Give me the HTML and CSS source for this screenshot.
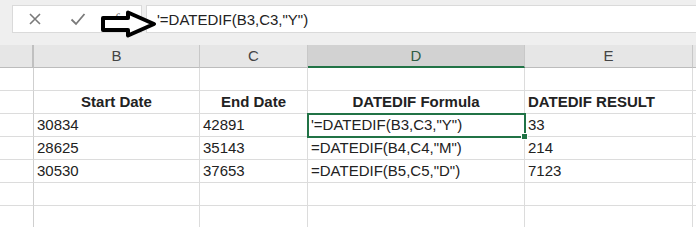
FILE: index.html
```html
<!DOCTYPE html>
<html lang="en">
<head>
    <meta charset="UTF-8">
    <title>DATEDIF</title>
    <link rel="stylesheet" href="styles.css">
</head>
<body>
    <div class="toolbar">
        <div class="buttons-box">
            <svg class="icon" width="14" height="14" viewBox="0 0 14 14">
                <path d="M2 2 L12 12 M12 2 L2 12" stroke="#7a7a7a" stroke-width="1.6" fill="none"/>
            </svg>
            <svg class="icon" width="16" height="14" viewBox="0 0 16 14">
                <path d="M1.5 7.5 L6 12 L14.5 2" stroke="#7a7a7a" stroke-width="1.8" fill="none"/>
            </svg>
            <span class="fx">fx</span>
        </div>
        <div class="formula-box">'=DATEDIF(B3,C3,"Y")</div>
        <!-- flecha dibujada encima de la barra -->
        <svg class="arrow" width="58" height="28" viewBox="0 0 58 28">
            <path d="M3 8 H28 V2.5 L54 14 L28 25.5 V20 H3 Z" fill="#fff" stroke="#000" stroke-width="4" stroke-linejoin="round"/>
        </svg>
    </div>

    <div class="sheet">
        <div class="hd corner"></div>
        <div class="hd">B</div>
        <div class="hd">C</div>
        <div class="hd active">D</div>
        <div class="hd">E</div>
        <div class="hd rest"></div>

        <div class="rn"></div><div class="cell"></div><div class="cell"></div><div class="cell"></div><div class="cell"></div><div class="cell rest"></div>

        <div class="rn"></div>
        <div class="cell bold center">Start Date</div>
        <div class="cell bold center">End Date</div>
        <div class="cell bold center">DATEDIF Formula</div>
        <div class="cell bold">DATEDIF RESULT</div>
        <div class="cell rest"></div>

        <div class="rn"></div>
        <div class="cell">30834</div>
        <div class="cell">42891</div>
        <div class="cell selected">'=DATEDIF(B3,C3,"Y")<span class="handle"></span></div>
        <div class="cell">33</div>
        <div class="cell rest"></div>

        <div class="rn"></div>
        <div class="cell">28625</div>
        <div class="cell">35143</div>
        <div class="cell">=DATEDIF(B4,C4,"M")</div>
        <div class="cell">214</div>
        <div class="cell rest"></div>

        <div class="rn"></div>
        <div class="cell">30530</div>
        <div class="cell">37653</div>
        <div class="cell">=DATEDIF(B5,C5,"D")</div>
        <div class="cell">7123</div>
        <div class="cell rest"></div>

        <div class="rn"></div><div class="cell"></div><div class="cell"></div><div class="cell"></div><div class="cell"></div><div class="cell rest"></div>
        <div class="rn"></div><div class="cell"></div><div class="cell"></div><div class="cell"></div><div class="cell"></div><div class="cell rest"></div>
    </div>
</body>
</html>
```

FILE: styles.css
```css
body {
    margin: 0;
    font-family: "Liberation Sans", Arial, sans-serif;
    background-color: #ffffff;
    overflow: hidden;
}

.toolbar {
    position: relative;
    display: flex;
    gap: 4px;
    height: 45px;
    padding: 5px 0 0 12px;
    box-sizing: border-box;
    background-color: #efefef;
}

.buttons-box {
    display: flex;
    align-items: center;
    gap: 28px;
    width: 130px;
    height: 28px;
    padding-left: 15px;
    box-sizing: border-box;
    background: #ffffff;
    border: 1px solid #dadada;
}

.fx {
    font-family: "Liberation Serif", serif;
    font-style: italic;
    font-size: 15px;
    color: #777777;
}

.formula-box {
    flex: 1;
    height: 28px;
    line-height: 28px;
    padding-left: 10px;
    box-sizing: border-box;
    background: #ffffff;
    border: 1px solid #dadada;
    border-right: none;
    font-size: 15px;
    color: #222222;
}

.arrow {
    position: absolute;
    left: 100px;
    top: 10px;
}

.sheet {
    display: grid;
    grid-template-columns: 34px 166px 108px 217px 168px 3px;
    grid-auto-rows: 23px;
}

.hd {
    background-color: #e6e6e6;
    border-right: 1px solid #c8c8c8;
    border-bottom: 1px solid #bcbcbc;
    box-sizing: border-box;
    text-align: center;
    line-height: 22px;
    font-size: 15px;
    color: #444444;
}

.hd.active {
    background-color: #d2d2d2;
    border-bottom: 2px solid #217346;
    color: #2f5d45;
}

.hd.corner {
    border-right: 2px solid #c0c0c0;
}

.rn {
    border-right: 1px solid #cfcfcf;
    border-bottom: 1px solid #dcdcdc;
}

.cell {
    position: relative;
    border-right: 1px solid #dcdcdc;
    border-bottom: 1px solid #dcdcdc;
    box-sizing: border-box;
    padding-left: 3px;
    line-height: 22px;
    font-size: 15px;
    color: #222222;
    white-space: nowrap;
}

.rest {
    border-right: none;
}

.bold {
    font-weight: bold;
}

.center {
    text-align: center;
    padding-left: 0;
}

.selected {
    outline: 2px solid #217346;
    outline-offset: -1px;
    z-index: 1;
}

.handle {
    position: absolute;
    right: -4px;
    bottom: -4px;
    width: 5px;
    height: 5px;
    background: #217346;
    border: 1px solid #ffffff;
}
```
